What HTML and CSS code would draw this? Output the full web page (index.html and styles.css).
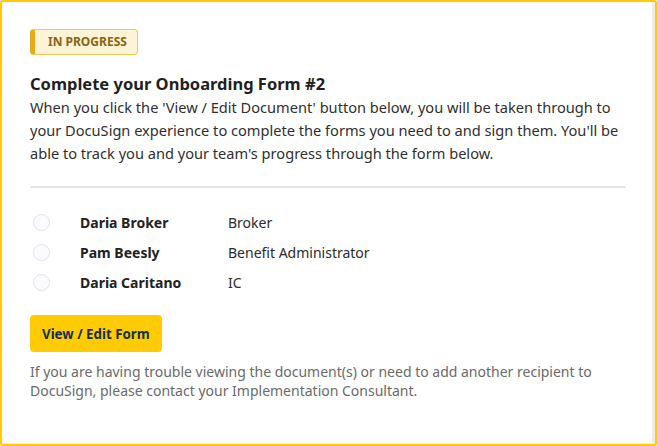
FILE: index.html
```html
<!DOCTYPE html>
<html lang="en">
<head>
<meta charset="utf-8">
<title>Onboarding Form</title>
<link rel="stylesheet" href="styles.css">
</head>
<body>
<div class="frame">
  <div class="card">
    <span class="badge">IN PROGRESS</span>
    <h2 class="title">Complete your Onboarding Form #2</h2>
    <p class="intro">When you click the 'View / Edit Document' button below, you will be taken through to your DocuSign experience to complete the forms you need to and sign them. You'll be able to track you and your team's progress through the form below.</p>
    <hr class="divider">
    <ul class="people">
      <li class="person"><span class="radio"></span><span class="name">Daria Broker</span><span class="role">Broker</span></li>
      <li class="person"><span class="radio"></span><span class="name">Pam Beesly</span><span class="role">Benefit Administrator</span></li>
      <li class="person"><span class="radio"></span><span class="name">Daria Caritano</span><span class="role">IC</span></li>
    </ul>
    <button class="btn" type="button">View / Edit Form</button>
    <p class="note">If you are having trouble viewing the document(s) or need to add another recipient to DocuSign, please contact your Implementation Consultant.</p>
  </div>
</div>
</body>
</html>
```

FILE: styles.css
```css
* { box-sizing: border-box; }
html, body { margin: 0; padding: 0; background: #ffffff; }
body {
  font-family: "Noto Sans", "Open Sans", sans-serif;
  color: #2b2b2b;
  width: 657px;
  height: 446px;
}
.frame {
  width: 657px;
  height: 446px;
  border: 2px solid #ffcb05;
  border-radius: 3px;
  background: #ffffff;
  box-shadow: inset -3px -1px 0 #ececec;
}
.card {
  padding: 27px 28px 0 28px;
  display: flex;
  flex-direction: column;
  align-items: flex-start;
}
.badge {
  display: inline-block;
  height: 26px;
  line-height: 24px;
  padding: 0 10px 0 13px;
  font-size: 12px;
  font-weight: 700;
  color: #8a6512;
  background: #fdf3d7;
  border: 1px solid #f2c955;
  border-left: 5px solid #e9a91b;
  border-radius: 4px;
}
.title {
  margin: 18px 0 0 0;
  font-size: 16.5px;
  font-weight: 700;
  line-height: 22px;
  color: #1f1f1f;
}
.intro {
  margin: 1px 0 0 0;
  font-size: 14.6px;
  line-height: 23px;
  color: #2f2f2f;
}
.divider {
  align-self: stretch;
  margin: 21px 1px 0 0;
  border: 0;
  height: 2px;
  background: #e6e6e6;
}
.people {
  list-style: none;
  margin: 24px 0 0 0;
  padding: 0;
  display: flex;
  flex-direction: column;
  gap: 10px;
}
.person {
  display: flex;
  align-items: center;
  height: 20px;
  font-size: 14px;
}
.radio {
  width: 17px;
  height: 17px;
  border-radius: 50%;
  border: 1px solid #e1e1ea;
  background: #fbfbfd;
  margin-left: 3px;
}
.name {
  margin-left: 30px;
  width: 148px;
  font-weight: 700;
  color: #222222;
}
.role {
  color: #2b2b2b;
}
.btn {
  margin-top: 23px;
  height: 37px;
  padding: 0 12px;
  border: 0;
  border-radius: 4px;
  background: #ffcb05;
  color: #15304a;
  font-family: inherit;
  font-size: 13.3px;
  font-weight: 700;
}
.note {
  margin: 10px 0 0 0;
  font-size: 14px;
  line-height: 19px;
  color: #6a6a6a;
}
```
